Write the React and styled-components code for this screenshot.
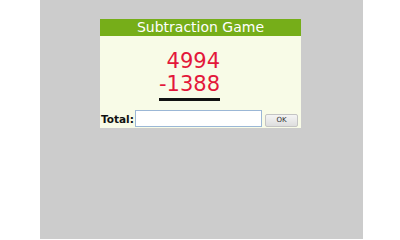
import React, { useState } from 'react';
import styled, { createGlobalStyle } from 'styled-components';

const GlobalStyle = createGlobalStyle`
  html, body {
    margin: 0;
    padding: 0;
    background: #ffffff;
    font-family: "DejaVu Sans", Verdana, sans-serif;
  }
`;

const Page = styled.div`
  width: 400px;
  height: 240px;
  display: flex;
  justify-content: flex-start;
`;

const Stage = styled.div`
  margin-left: 40px;
  width: 323px;
  height: 239px;
  background: #cccccc;
  padding-top: 19px;
  box-sizing: border-box;
  display: flex;
  flex-direction: column;
  align-items: flex-start;
`;

const Card = styled.div`
  margin-left: 60px;
  width: 201px;
  background: #f8fbe7;
  display: flex;
  flex-direction: column;
`;

const Header = styled.div`
  height: 17px;
  background: #76ae19;
  color: #ffffff;
  font-size: 14px;
  line-height: 17px;
  text-align: center;
`;

const Sum = styled.div`
  margin: 14px 0 0 59px;
  width: 61px;
  display: flex;
  flex-direction: column;
  align-items: flex-end;
  color: #e3173a;
  font-size: 21px;
  line-height: 23px;
`;

const Rule = styled.div`
  margin: 2px 0 0 59px;
  width: 61px;
  height: 3px;
  background: #111111;
`;

const AnswerRow = styled.div`
  margin-top: 9px;
  padding: 0 3px 1px 1px;
  display: flex;
  align-items: center;
  gap: 1px;
`;

const Label = styled.label`
  font-size: 10.5px;
  font-weight: bold;
  color: #111111;
`;

const Input = styled.input`
  width: 127px;
  height: 17px;
  box-sizing: border-box;
  border: 1px solid #9bb7d6;
  background: #ffffff;
  outline: none;
  padding: 0 2px;
`;

const Button = styled.button`
  margin-left: 2px;
  margin-top: 3px;
  width: 35px;
  height: 13px;
  padding: 0;
  border: 1px solid #c4c4c4;
  border-radius: 2px;
  background: linear-gradient(#f4f4f4, #dedede);
  color: #333333;
  font-family: "DejaVu Sans", sans-serif;
  font-size: 7px;
  line-height: 11px;
`;

export default function App() {
  const [total, setTotal] = useState('');

  return (
    <>
      <GlobalStyle />
      <Page>
        <Stage>
          <Card>
            <Header>Subtraction Game</Header>
            <Sum>
              <span>4994</span>
              <span>-1388</span>
            </Sum>
            <Rule />
            <AnswerRow>
              <Label htmlFor="total">Total:</Label>
              <Input id="total" value={total} onChange={e => setTotal(e.target.value)} />
              <Button>OK</Button>
            </AnswerRow>
          </Card>
        </Stage>
      </Page>
    </>
  );
}
